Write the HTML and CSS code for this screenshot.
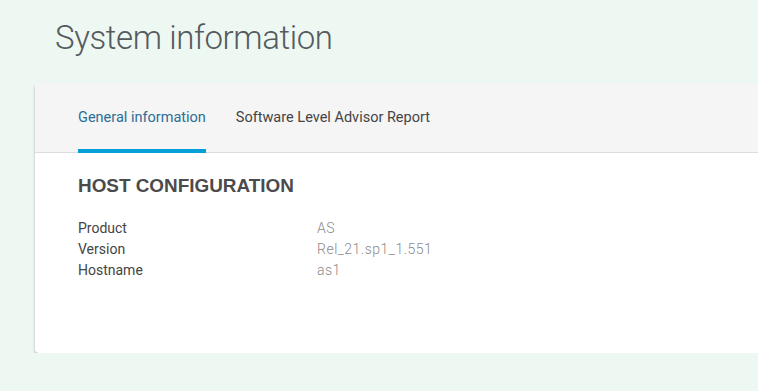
FILE: index.html
```html
<!DOCTYPE html>
<html lang="en">
<head>
  <meta charset="UTF-8">
  <title>System information</title>
  <link rel="stylesheet" href="styles.css">
</head>
<body>
  <h1 class="page-title">System information</h1>

  <div class="card">
    <div class="tabs">
      <div class="tab active">General information</div>
      <div class="tab">Software Level Advisor Report</div>
    </div>

    <div class="card-body">
      <h2 class="section-title">HOST CONFIGURATION</h2>
      <div class="info-grid">
        <div class="info-label">Product</div>
        <div class="info-value">AS</div>
        <div class="info-label">Version</div>
        <div class="info-value">Rel_21.sp1_1.551</div>
        <div class="info-label">Hostname</div>
        <div class="info-value">as1</div>
      </div>
    </div>
  </div>
</body>
</html>
```

FILE: styles.css
```css
    html, body {
      overflow: hidden;
    }

    body {
      font-family: Roboto, "Liberation Sans", sans-serif;
      background: #eef8f3;
      margin: 0;
      padding: 0 0 0 35px;
    }

    .page-title {
      font-size: 33px;
      font-weight: 300;
      letter-spacing: -0.4px;
      color: #555a5e;
      margin: 0;
      padding: 17px 0 0 20px;
      line-height: 42px;
      height: 67px;
      box-sizing: border-box;
    }

    .card {
      background: #ffffff;
      border-radius: 4px 0 0 4px;
      box-shadow: 0 2px 3px rgba(0, 0, 0, 0.28);
      margin-top: 16px;
      margin-right: -10px;
      overflow: hidden;
    }

    .tabs {
      background: #f5f5f5;
      border-bottom: 1px solid #dcdcdc;
      height: 70px;
      box-sizing: border-box;
      display: flex;
      gap: 30px;
      padding-left: 43px;
    }

    .tab {
      font-size: 14.5px;
      color: #444;
      line-height: 70px;
      height: 70px;
      box-sizing: border-box;
      white-space: nowrap;
    }

    .tab.active {
      color: #2a6e96;
      border-bottom: 4px solid #049fd9;
    }

    .card-body {
      padding: 22px 43px 72px;
    }

    .section-title {
      font-family: "Liberation Sans", Arial, sans-serif;
      font-size: 18.9px;
      font-weight: bold;
      color: #4b4b4b;
      margin: 0 0 22px;
      line-height: 21px;
    }

    .info-grid {
      display: grid;
      grid-template-columns: 239px auto;
      font-size: 14px;
      line-height: 21px;
    }

    .info-label {
      color: #444;
    }

    .info-value {
      color: #8a8a8a;
      font-weight: 300;
      letter-spacing: 0.5px;
    }
```
